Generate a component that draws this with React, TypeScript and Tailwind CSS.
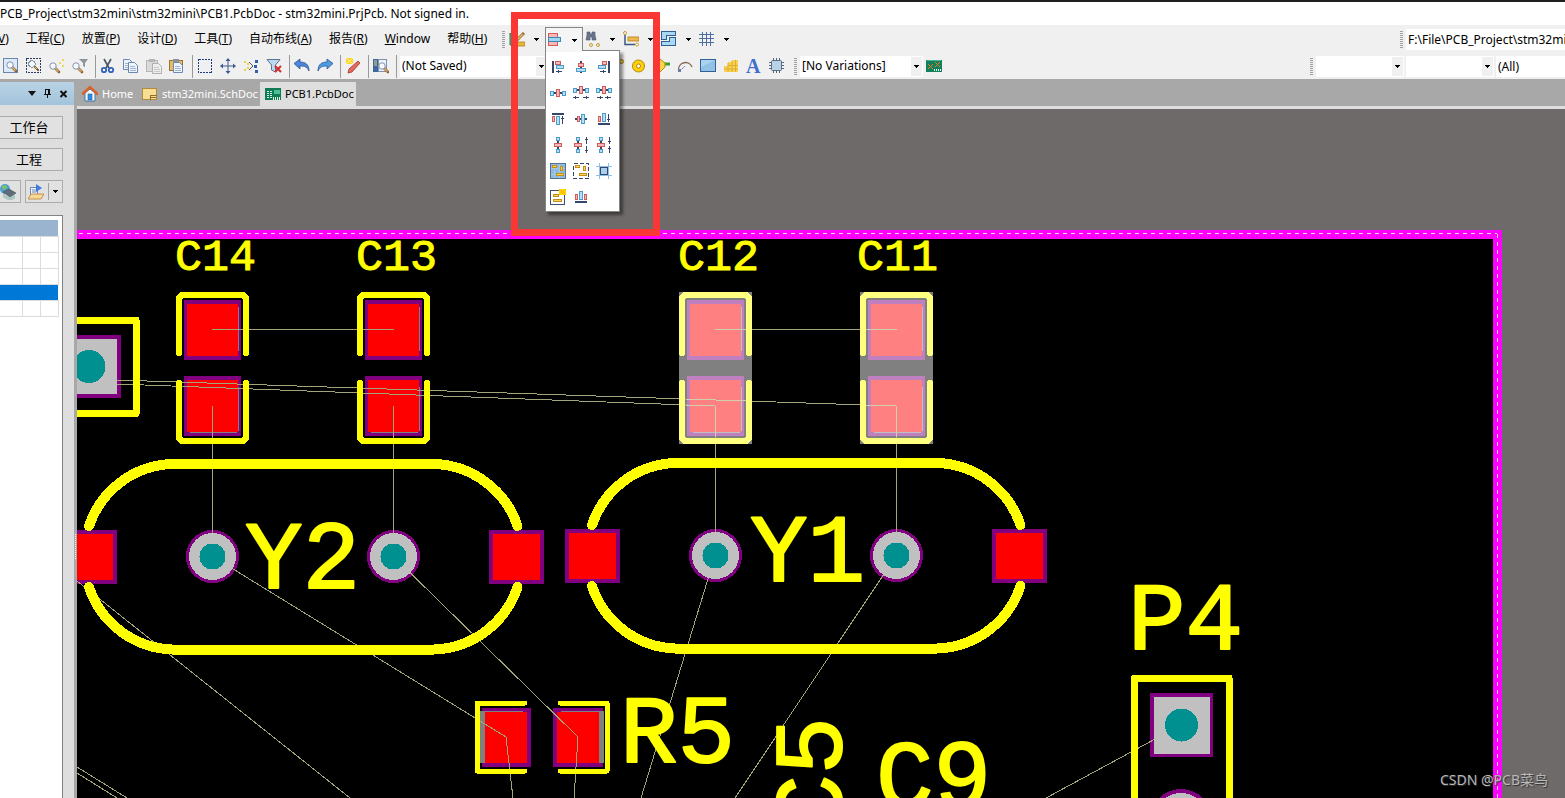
import type { ReactNode } from "react";

const NAVY = "#34466b";

function Icon({ children, smooth = false }: { children: ReactNode; smooth?: boolean }) {
  return (
    <svg width="16" height="16" viewBox="0 0 16 16" fill="none" shapeRendering={smooth ? "auto" : "crispEdges"} className="shrink-0" aria-hidden="true">
      {children}
    </svg>
  );
}

function Box({ x, y, w, h, red = false }: { x: number; y: number; w: number; h: number; red?: boolean }) {
  return <rect x={x + 0.5} y={y + 0.5} width={w - 1} height={h - 1} fill={red ? "#f7b9b9" : "#b5e0f5"} stroke={red ? "#cf5b5b" : "#4b9cc8"} />;
}

function Line({ d, color = NAVY, w = 1 }: { d: string; color?: string; w?: number }) {
  return <path d={d} stroke={color} strokeWidth={w} />;
}

function Caret() {
  return (
    <svg width="5" height="3" viewBox="0 0 5 3" shapeRendering="crispEdges" className="shrink-0" aria-hidden="true">
      <path d="M0 0h5v1h-1v1h-1v1h-1v-1h-1v-1h-1z" fill="#000" />
    </svg>
  );
}

function Grip() {
  return (
    <svg width="3" height="17" viewBox="0 0 3 17" shapeRendering="crispEdges" className="shrink-0" aria-hidden="true">
      <path d="M1.5 0v17" stroke="#a0a0a0" strokeWidth="3" strokeDasharray="1 1" />
    </svg>
  );
}

/* ---------- alignment menu icons ---------- */

const alignIcons: [string, ReactNode][] = [
  ["Align Left", <><Line d="M3 2v12" w={2} /><Box x={5} y={2} w={6} h={4} red /><Box x={6} y={6} w={8} h={4} /><Line d="M6 12.500h6M8.500 11v3M7.500 12v1" /></>],
  ["Align Horizontal Centers", <><Line d="M8 2v12" w={2} /><Box x={5} y={4} w={6} h={4} red /><Box x={3} y={9} w={10} h={4} /></>],
  ["Align Right", <><Line d="M13 2v12" w={2} /><Box x={6} y={2} w={5} h={4} red /><Box x={2} y={6} w={8} h={4} /><Line d="M4 12.500h6M7.500 11v3M8.500 12v1" /></>],
  ["Distribute Horizontally", <><Line d="M3 8h10" w={2} /><Box x={0} y={6} w={4} h={5} /><Box x={6} y={4} w={4} h={8} red /><Box x={12} y={6} w={4} h={5} /></>],
  ["Increase Horizontal Spacing", <><Line d="M3 5h10" w={2} /><Box x={0} y={3} w={4} h={5} /><Box x={6} y={1} w={4} h={8} red /><Box x={12} y={3} w={4} h={5} /><Line d="M0 12.500h6M2.500 11v3M1.500 12v1M10 12.500h6M13.500 11v3M14.500 12v1" /></>],
  ["Decrease Horizontal Spacing", <><Line d="M3 5h10" w={2} /><Box x={0} y={3} w={4} h={5} /><Box x={6} y={1} w={4} h={8} red /><Box x={12} y={3} w={4} h={5} /><Line d="M1 12.500h6M4.500 11v3M5.500 12v1M9 12.500h6M11.500 11v3M10.500 12v1" /></>],
  ["Align Top", <><Line d="M2 3h12" w={2} /><Box x={2} y={5} w={3} h={6} red /><Box x={6} y={5} w={4} h={9} /><Line d="M12.500 5v8M11 7.500h3M12 6.500h1" /></>],
  ["Align Vertical Centers", <><Line d="M2 8h12" w={2} /><Box x={4} y={5} w={3} h={6} red /><Box x={8} y={3} w={4} h={10} /></>],
  ["Align Bottom", <><Line d="M2 13h12" w={2} /><Box x={2} y={5} w={3} h={6} red /><Box x={6} y={2} w={4} h={9} /><Line d="M12.500 3v8M11 8.500h3M12 9.500h1" /></>],
  ["Distribute Vertically", <><Line d="M8 3v10" w={2} /><Box x={6} y={0} w={4} h={4} /><Box x={4} y={6} w={8} h={4} red /><Box x={6} y={12} w={4} h={4} /></>],
  ["Increase Vertical Spacing", <><Line d="M5 3v10" w={2} /><Box x={3} y={0} w={4} h={4} /><Box x={1} y={6} w={8} h={4} red /><Box x={3} y={12} w={4} h={4} /><Line d="M13.500 0v7M12 2.500h3M13.500 9v7M12 13.500h3" /></>],
  ["Decrease Vertical Spacing", <><Line d="M5 3v10" w={2} /><Box x={3} y={0} w={4} h={4} /><Box x={1} y={6} w={8} h={4} red /><Box x={3} y={12} w={4} h={4} /><Line d="M13.500 0v7M12 4.500h3M13.500 9v7M12 11.500h3" /></>],
  [
    "Arrange Within Room",
    <>
      <rect x=".5" y=".5" width="15" height="15" fill="#8dbbe0" stroke="#56718f" />
      <Line d="M1 5.500h14M1 11.500h14M4.500 1v14M9.500 1v14" color="#a3cbe8" />
      <Tiles />
    </>,
  ],
  [
    "Arrange Within Rectangle",
    <>
      <rect x=".5" y=".5" width="15" height="15" stroke="#34466b" strokeDasharray="4 2" />
      <Tiles />
    </>,
  ],
  [
    "Align To Grid",
    <>
      <Line d="M0 3.500h16M0 12.500h16M3.500 0v16M12.500 0v16" color="#8cc0ea" />
      <rect x="4.500" y="4.500" width="7" height="7" fill="#a9d0ee" stroke="#34466b" />
    </>,
  ],
  [
    "Arrange Outside Board",
    <>
      <rect x=".5" y="1.500" width="14" height="14" fill="#fff" stroke="#3b4f75" />
      <rect x="3.500" y="5.500" width="5" height="2" fill="#ffd45c" stroke="#c58e14" />
      <rect x="3.500" y="10.500" width="8" height="2" fill="#ffd45c" stroke="#c58e14" />
      <rect x="9" y="0" width="7" height="6" fill="#ffd800" />
      <Line d="M9 0l7 6M16 0l-7 6" color="#ffbe00" />
    </>,
  ],
  ["Align Baselines", <><Line d="M2 13h12" w={2} /><Box x={2} y={5} w={3} h={6} red /><Box x={6} y={2} w={4} h={9} /><Box x={11} y={5} w={3} h={6} red /></>],
];

function Tiles() {
  return (
    <g fill="#ffd45c" stroke="#c58e14">
      <path d="M2.500 2.500h4v2h-4zM10.500 3.500h2v4h-2zM6.500 10.500h7v2h-7z" />
    </g>
  );
}

/* ---------- main toolbar icons ---------- */

const lens = (x: number, y: number) => (
  <g transform={`translate(${x} ${y})`}>
    <path d="M6 6l4 4" stroke="#8a6236" strokeWidth="2.600" strokeLinecap="round" />
    <path d="M6 6l3.500 3.500" stroke="#e8b671" strokeWidth="1.200" />
    <circle cx="4" cy="4" r="3.200" fill="#f3f9ff" stroke="#8794a8" />
  </g>
);

const page = (x: number, y: number, fill: string, edge: string) => (
  <g transform={`translate(${x} ${y})`}>
    <path d="M.5.5h6l3 3v7h-9z" fill={fill} stroke={edge} />
    <path d="M2 4.500h5M2 6.500h6M2 8.500h6" stroke={edge} strokeOpacity=".6" />
  </g>
);

const toolbarGroups: [string, ReactNode][][] = [
  [
    ["Zoom Document", <><rect x=".5" y=".5" width="14" height="14" fill="#dcebfb" stroke="#6c86ad" />{lens(3, 3)}</>],
    ["Zoom Area", <><path d="M.5.5h14v14H.5z" stroke="#2b3a66" strokeDasharray="2 1" />{lens(2, 2)}</>],
    ["Zoom Selected", <>{lens(0, 4)}<path d="M10 4h2v2h-2zM13 1h2v2h-2zM13 7h2v2h-2z" fill="#efd75d" /></>],
    ["Zoom Filtered", <><path d="M7 1h9l-3 4v4l-2-1V5z" fill="#8d949c" />{lens(0, 4)}</>],
  ],
  [
    ["Cut", <><path d="M4 1l5 9M11 1L6 10" stroke="#4b5360" strokeWidth="1.600" /><circle cx="4" cy="12" r="2.200" stroke="#2f63bd" strokeWidth="1.800" /><circle cx="11" cy="12" r="2.200" stroke="#2f63bd" strokeWidth="1.800" /></>],
    ["Copy", <>{page(0, 1, "#edf4fc", "#6c87b3")}{page(5, 4, "#edf4fc", "#6c87b3")}</>],
    ["Paste", <><rect x=".5" y="2.500" width="11" height="11" fill="#dadada" stroke="#b5b5b5" /><path d="M3 1h6v3H3z" fill="#b5b5b5" />{page(6, 5, "#eee", "#b0b0b0")}</>],
    ["Rubber Stamp", <><rect x=".5" y="2.500" width="13" height="10" fill="#e9bb62" stroke="#9b7430" /><path d="M4 1h6v3H4z" fill="#8b929b" />{page(4, 4, "#edf4fc", "#6c87b3")}</>],
  ],
  [
    ["Select Area", <path d="M1.500 1.500h13v13h-13z" stroke="#1f3d86" strokeDasharray="2 1" />],
    ["Move", <><path d="M8 1.500v13M1.500 8h13" stroke="#3d5a95" /><path d="M8 0l2.500 3h-5zM8 16l2.500-3h-5zM0 8l3-2.500v5zM16 8l-3-2.500v5z" fill="#3d5a95" /></>],
    ["Deselect", <><path d="M1 3h2v2H1zM1 11h2v2H1zM4 5h2v2H4zM4 9h2v2H4z" fill="#e8d04f" /><path d="M6 4l4 4-4 4" stroke="#555" /><path d="M12 2h3v3h-3zM11 7h3v3h-3zM12 12h3v3h-3z" fill="#2c62a8" /></>],
    ["Clear Filter", <><path d="M1 1.500h13L9.500 7v7l-4-2V7z" fill="#bcd8f3" stroke="#5d7290" /><path d="M9 8l6 6M15 8l-6 6" stroke="#d22b2b" strokeWidth="2" /></>],
  ],
  [
    ["Undo", <path d="M0 5.500L6 1v3c5 0 9 2 9 9-2-4-4-5-9-5v3z" fill="#4d86d8" stroke="#2d5596" strokeWidth=".8" />],
    ["Redo", <path d="M16 5.500L10 1v3C5 4 1 6 1 13c2-4 4-5 9-5v3z" fill="#4d9be0" stroke="#2d5596" strokeWidth=".8" />],
  ],
  [
    ["Cross Probe", <><path d="M3 15l1-4 9-8 2 2-8 9z" fill="#e8695f" stroke="#9c3a31" strokeWidth=".8" /><path d="M1 0h7v6H1z" fill="#ffd21e" /><path d="M1 0l7 6M8 0L1 6" stroke="#fff3a0" /></>],
  ],
  [
    ["Browse Components", <><rect x="0" y="1" width="5" height="13" fill="#3c679f" /><path d="M1 3h3M1 5h3M1 7h3" stroke="#e6cf7a" /><rect x="5.500" y="1.500" width="8" height="12" fill="#eaf2fb" stroke="#7d90ac" />{lens(5, 4)}</>],
  ],
];

const placeIcons: [string, ReactNode][] = [
  ["Interactive Route", <path d="M2 13l8-8" stroke="#b88a1a" />],
  ["Interactive Differential", <path d="M2 13l8-8" stroke="#b88a1a" />],
  ["Route Multiple", <><path d="M2 13l11-9" stroke="#4b9cc8" /><circle cx="13.500" cy="3.500" r="2" fill="#ffd34a" stroke="#9e7a1a" /></>],
  ["Place Pad", <><circle cx="7.500" cy="8" r="6" fill="#ffcf10" stroke="#b58a00" /><circle cx="7.500" cy="8" r="2" fill="#fff" stroke="#b58a00" /></>],
  ["Place Via", <><path d="M8 6h8" stroke="#39a12c" strokeWidth="3" /><path d="M1 3l5-2 5 4v4l-5 5-5-4z" fill="#ffd34a" stroke="#b58a00" /></>],
  ["Place Arc", <><path d="M1.500 12A7 7 0 0 1 15 9" stroke="#8b6b55" strokeWidth="1.400" /><path d="M3 13l5-5" stroke="#4a76c5" strokeDasharray="2 1" /><rect x="1" y="11" width="3" height="3" fill="#6f7fa5" /></>],
  ["Place Fill", <><rect x=".5" y="1.500" width="15" height="12" fill="#8fc2e4" stroke="#355f96" /><path d="M1 9V2h14z" fill="#a9d3ee" /></>],
  ["Place Polygon", <><path d="M1 8h4V4h4V2h6v12H1z" fill="#f9d350" /><path d="M1 11h14M5 5v9M9 3v11M12.500 2v12M5 7.500h10" stroke="#dcae34" /></>],
  ["Place String", <text x="0" y="15" fontFamily="Liberation Serif, serif" fontSize="20" fontWeight="700" fill="#3f6fd0">A</text>],
  ["Place Component", <><path d="M0 4.500h15M0 7.500h15M0 10.500h15M4.500 0v15M7.500 0v15M10.500 0v15" stroke="#556a80" /><rect x="2.500" y="2.500" width="10" height="10" rx="1" fill="#b9d2e6" stroke="#5a6d82" /></>],
];

const menubarIcons: [string, ReactNode][] = [
  ["Utilities", <><path d="M1 2v12h7z" fill="#3dbb8c" stroke="#16835c" /><path d="M6 11L15 2" stroke="#8e6128" strokeWidth="3" /><path d="M6 11l8-8" stroke="#f0c060" strokeWidth="1.400" /><rect x="6" y="11" width="10" height="4" fill="#e9b63d" stroke="#b47e14" strokeWidth=".8" /></>],
  ["Align", <><rect x="1.500" y="1.500" width="9" height="12" fill="#f9b8b8" stroke="#d65c5c" /><path d="M2 7.500h9" stroke="#d65c5c" /><rect x="1.500" y="5.500" width="12" height="4" fill="#9ed6f3" stroke="#3f86b4" /></>],
  ["Find", <><path d="M2 1h3v2h2V1h3v3l1 5H7V6H5v3H1l1-5z" fill="#68758a" stroke="#4c586c" strokeWidth=".6" /><circle cx="6" cy="14" r="1.500" stroke="#c39a2c" /><circle cx="13" cy="14" r="1.500" stroke="#c39a2c" /></>],
  ["Dimension", <><path d="M2 4v9.500h10" stroke="#3b5685" strokeWidth="1.500" /><rect x="5" y="6" width="11" height="4" fill="#eeb84a" stroke="#b57d18" strokeWidth=".8" /><circle cx="2" cy="2" r="1.500" fill="#fff" stroke="#c39a2c" /><circle cx="14" cy="13.500" r="1.500" fill="#fff" stroke="#c39a2c" /></>],
  ["Room", <g fill="#a9d8f2" stroke="#2f5f92"><path d="M.5.5h14v4h-9v4h-5z" /><path d="M8.500 6.500h6v8h-14v-4h8z" /></g>],
  ["Grid", <path d="M0 3.500h15M0 7.500h15M0 11.500h15M3.500 1v14M7.500 1v14M11.500 1v14" stroke="#4d6ea0" />],
];

const menus: [string, string][] = [
  ["工程", "C"],
  ["放置", "P"],
  ["设计", "D"],
  ["工具", "T"],
  ["自动布线", "A"],
  ["报告", "R"],
];

function Combo({ label, value, className }: { label: string; value: string; className: string }) {
  return (
    <div className={`relative h-[21px] shrink-0 bg-white ${className}`}>
      <select aria-label={label} className="h-full w-full appearance-none bg-transparent pl-[2px] pr-3 text-[12px] leading-[20px] outline-none">
        <option>{value}</option>
      </select>
      <span className="pointer-events-none absolute inset-y-px right-px flex w-[11px] items-center justify-center bg-[#f0f0f0]">
        <Caret />
      </span>
    </div>
  );
}

function AlignMenu() {
  return (
    <div role="menu" className="absolute -left-px top-[22px] z-20 grid w-[75px] auto-rows-[26px] grid-cols-[repeat(3,23px)] border border-[#858585] bg-white pb-px pt-[3px] shadow-[3px_3px_3px_rgba(0,0,0,0.45)]">
      {alignIcons.map(([name, art]) => (
        <button key={name} role="menuitem" aria-label={name} className="flex items-center justify-center">
          <Icon>{art}</Icon>
        </button>
      ))}
    </div>
  );
}

function MenuBar() {
  return (
    <div className="flex h-7 shrink-0 items-center">
      <nav className="flex w-[502px] shrink-0 gap-[17px] whitespace-nowrap">
        <button className="-ml-[2px]"><u>V</u>)</button>
        {menus.map(([name, key]) => (
          <button key={name}>{name}(<u>{key}</u>)</button>
        ))}
        <button><u>W</u>indow</button>
        <button>帮助(<u>H</u>)</button>
      </nav>
      <Grip />
      <div className="ml-[2px] flex">
        {menubarIcons.map(([name, art], i) => (
          <div key={name} className={i === 1 ? "relative h-6 w-[38px] border border-b-0 border-[#858585] bg-[#f5f5f5]" : "h-6 w-[38px] border border-transparent"}>
            <button aria-label={name} className={i === 1 ? "relative z-30 flex h-6 w-9 items-center gap-[9px] bg-[#f5f5f5] pl-px" : "flex h-[22px] w-9 items-center gap-[9px] pl-px"}>
              <Icon smooth={i < 4 && i !== 1}>{art}</Icon>
              <Caret />
            </button>
            {i === 1 && <AlignMenu />}
          </div>
        ))}
      </div>
      <div className="ml-auto flex items-center">
        <Grip />
        <input aria-label="Document path" defaultValue="F:\File\PCB_Project\stm32mini" className="ml-[3px] h-[21px] w-[159px] bg-white pl-[2px] outline-none" />
      </div>
    </div>
  );
}

function ToolBar() {
  return (
    <div className="flex h-[26px] shrink-0 items-center">
      {toolbarGroups.map((group, g) => (
        <div key={g} className={g === 0 ? "-ml-px flex items-center" : "flex items-center"}>
          {group.map(([name, art]) => (
            <button key={name} aria-label={name} className="flex w-[23px] justify-center">
              <Icon smooth={name !== "Select Area" && name !== "Zoom Area"}>{art}</Icon>
            </button>
          ))}
          <span className="ml-1 h-[23px] w-px bg-[#999]" />
        </div>
      ))}
      <Combo label="Filter" value="(Not Saved)" className="ml-[3px] w-[148px]" />
      <div className="ml-[10px] flex">
        {placeIcons.map(([name, art]) => (
          <button key={name} aria-label={name} className="flex w-[23px] justify-center">
            <Icon smooth={name !== "Place Fill"}>{art}</Icon>
          </button>
        ))}
      </div>
      <div className="ml-[6px] flex items-center">
        <Grip />
        <Combo label="Variations" value="[No Variations]" className="ml-[3px] w-[123px]" />
        <button aria-label="Variant board" className="ml-[3px]">
          <Icon>
            <rect x="0" y="2" width="16" height="12" fill="#12805d" />
            <path d="M1 2.500h14" stroke="#4bb893" />
            <path d="M2 6l5 5M7 6l-5 5M9 4l5 5M14 4l-5 5" stroke="#ef7a1c" />
            <path d="M8 12h8" stroke="#e8f5d8" strokeWidth="2" strokeDasharray="1 1" />
          </Icon>
        </button>
      </div>
      <div className="ml-auto flex items-center">
        <Grip />
        <Combo label="Mask level" value="" className="ml-[3px] w-[88px]" />
        <Combo label="Net" value="" className="ml-[2px] w-[88px]" />
        <input aria-label="Scope" defaultValue="(All)" className="ml-[2px] h-[21px] w-[69px] bg-white pl-[2px] outline-none" />
      </div>
    </div>
  );
}

function ProjectsPanel() {
  return (
    <aside className="mt-[3px] flex w-[74px] shrink-0 flex-col bg-[#dedede]">
      <div className="flex h-[23px] shrink-0 items-center justify-end gap-2 bg-gradient-to-b from-[#b9d3e5] to-[#a3c4dc] pr-[6px]">
        <button aria-label="Panel menu"><svg width="8" height="5"><path d="M0 0h8L4 5z" fill="#111" /></svg></button>
        <button aria-label="Pin">
          <svg width="7" height="9" shapeRendering="crispEdges"><path d="M1 0h5v5h1v1H4v3H3V6H0V5h1z" fill="#111" /><path d="M2 1h2v4H2z" fill="#b0cde1" /></svg>
        </button>
        <button aria-label="Close panel"><svg width="9" height="8"><path d="M1.500 1l6 6M7.500 1l-6 6" stroke="#111" strokeWidth="2" /></svg></button>
      </div>
      <div className="mt-[11px] flex w-[63px] flex-col gap-[9px]">
        <button className="h-[23px] border border-l-0 border-[#ababab] bg-[#e1e1e1] pb-[2px] pr-1 text-[13px]">工作台</button>
        <button className="h-[23px] border border-l-0 border-[#ababab] bg-[#e1e1e1] pb-[2px] pr-1 text-[13px]">工程</button>
        <div className="flex gap-1">
          <button aria-label="Vault" className="flex h-[23px] w-[21px] items-center border border-l-0 border-[#ababab] bg-[#e1e1e1]">
            <Icon smooth>
              <circle cx="5" cy="5" r="5" fill="#4f9ed6" />
              <path d="M2 2l4-1 1 3-4 2z" fill="#7ec850" />
              <path d="M3 8l6-3 7 4-6 4z" fill="#5f6d7a" stroke="#39424c" strokeWidth=".5" />
              <path d="M4 10v4M6 11v4M8 12v4M10 13v3M12 12v4M14 11v4" stroke="#7fb0a6" />
            </Icon>
          </button>
          <button aria-label="Open" className="flex h-[23px] w-[38px] items-center gap-1 border border-[#ababab] bg-[#e1e1e1] pl-[2px]">
            <Icon smooth>
              <path d="M2.500 3.500h7v9h-7z" fill="#eef4fc" stroke="#6c87b3" />
              <path d="M4 6h4M4 8h4" stroke="#6c87b3" />
              <path d="M8 0l6 4-6 4z" fill="#3f7be0" />
              <path d="M0 15l3-5h13l-3 5z" fill="#f8d79a" stroke="#b9832e" strokeWidth=".8" />
            </Icon>
            <span className="h-[17px] w-px bg-[#a0a0a0]" />
            <Caret />
          </button>
        </div>
      </div>
      <div className="mt-3 w-[63px] flex-1 border-r border-t border-[#828282] bg-white pt-1">
        <table className="w-[58px] table-fixed border-collapse">
          <colgroup>
            <col className="w-[22px]" />
            <col className="w-[18px]" />
            <col className="w-[18px]" />
          </colgroup>
          <tbody>
            <tr className="h-4 bg-[#9ab3cf]"><td colSpan={3} /></tr>
            {["a", "b", "c"].map((row) => (
              <tr key={row} className="h-4">
                <td className="border border-l-0 border-[#dcdcdc]" />
                <td className="border border-[#dcdcdc]" />
                <td className="border border-[#dcdcdc]" />
              </tr>
            ))}
            <tr className="h-4 bg-[#0078d7]"><td colSpan={3} /></tr>
            <tr className="h-4">
              <td className="border border-l-0 border-[#dcdcdc]" />
              <td className="border border-[#dcdcdc]" />
              <td className="border border-[#dcdcdc]" />
            </tr>
          </tbody>
        </table>
      </div>
    </aside>
  );
}

function DocumentTabs() {
  return (
    <div role="tablist" className="flex h-[27px] shrink-0 whitespace-nowrap pl-[5px] pt-[3px] text-[11px]">
      <button role="tab" className="flex w-[60px] items-center gap-1 text-white">
        <Icon smooth>
          <path d="M3 7l5-4 5 4v8H3z" fill="#f4f8fb" stroke="#3f78a8" />
          <path d="M0 8.500L8 1l8 7.500" stroke="#d9622b" strokeWidth="2.400" />
          <rect x="6" y="8" width="4" height="6" fill="#2f8be0" stroke="#1d5ea0" strokeWidth=".6" />
        </Icon>
        Home
      </button>
      <button role="tab" className="flex w-[118px] items-center gap-1 text-white">
        <Icon>
          <rect x=".5" y="2.500" width="14" height="11" fill="#f8dd93" stroke="#b18a3c" />
          <path d="M8 13.500V9.500h7M9 11.500h5" stroke="#8f6d28" />
        </Icon>
        stm32mini.SchDoc
      </button>
      <button role="tab" aria-selected="true" className="flex w-24 items-center gap-1 bg-[#dedede] pl-[5px]">
        <Icon>
          <rect x="0" y="2" width="16" height="12" fill="#0e7a56" />
          <path d="M2 5h2M2 7h2M2 9h2M2 11h2M5 5h2M5 7h2M5 9h2M5 11h2" stroke="#d6f0e2" />
          <rect x="9" y="4" width="6" height="4" fill="#4cc095" />
          <path d="M8 12h8" stroke="#e8f5d8" strokeWidth="3" strokeDasharray="1 1" />
        </Icon>
        PCB1.PcbDoc
      </button>
    </div>
  );
}

/* ---------- board drawing ---------- */

const capacitors = [
  { id: "C14", x: 175, dx: 0, selected: false },
  { id: "C13", x: 356, dx: 181, selected: false },
  { id: "C12", x: 678, dx: 503, selected: true },
  { id: "C11", x: 857, dx: 684, selected: true },
];

const crystals = [
  { id: "Y2", dx: 0, dy: 0 },
  { id: "Y1", dx: 503, dy: -1 },
];

const designators = [
  { id: "Y2", x: 245, y: 588 },
  { id: "Y1", x: 750, y: 581 },
  { id: "R5", x: 620, y: 762 },
  { id: "C9", x: 876, y: 807 },
  { id: "P4", x: 1128, y: 649 },
];

function Board() {
  return (
    <svg viewBox="77 109 1488 689" preserveAspectRatio="xMinYMin slice" className="absolute inset-0 h-full w-full" fill="none" shapeRendering="crispEdges" role="img" aria-label="PCB layout">
      <path d="M77 239H1493V1200H77z" fill="#000" />
      <path d="M77 234H1497.500V1200" stroke="#ff00ff" strokeWidth="9" />
      <path d="M77 233.500H1497" stroke="#dcdcdc" strokeDasharray="4 4" strokeDashoffset="6" />
      <path d="M1497.500 234V1200" stroke="#dcdcdc" strokeDasharray="4 4" />

      {/* solder mask and copper */}
      <rect x="60" y="335" width="61" height="63" fill="#800080" />
      {capacitors.map(({ id, dx, selected }) => (
        <g key={id} transform={`translate(${dx} 0)`}>
          {selected && <rect x="176" y="292" width="73" height="152" fill="#808080" />}
          {[300, 376].map((y) => (
            <g key={y}>
              <rect x="184" y={y} width="57" height="60" fill={selected ? "#c080c0" : "#800080"} />
              <path d={y === 300 ? "M238.500 307v44" : "M238.500 387v44M190 432.500h47"} stroke={selected ? "#c0c0c0" : "#808080"} />
              <rect x="187" y={y + 4} width="51" height="52" fill={selected ? "#ff8080" : "#ff0000"} />
            </g>
          ))}
        </g>
      ))}
      {crystals.map(({ id, dx, dy }) => (
        <g key={id} transform={`translate(${dx} ${dy})`}>
          <path d="M62 529.500h55v54H62zM489 529.500h55v54h-55z" fill="#800080" />
          <path d="M66 533.500h47v46H66zM493 533.500h47v46h-47z" fill="#ff0000" />
          <circle cx="212.500" cy="556.500" r="26.500" fill="#800080" />
          <circle cx="393.500" cy="556.500" r="26.500" fill="#800080" />
        </g>
      ))}
      <path d="M482 708h49v59h-49zM553 708h50v59h-50z" fill="#800080" />
      <path d="M480 711h5v52h-5zM599 711h5v52h-5zM485 711h38v1h-38zM561 711h38v1h-38z" fill="#808080" />
      <path d="M485 712h42v51h-42zM557 712h42v51h-42z" fill="#ff0000" />
      <rect x="1150" y="693" width="63" height="64" fill="#800080" />
      <circle cx="1181" cy="820" r="31" fill="#800080" />

      {/* unrouted connections */}
      <path
        d="M212 329.500H394M715 329.500H897M212.500 406V540M393.500 406V540M715.500 406V540M896.500 406V540M117 380L896 406M117 384L715 406M212 556L506 737L513 798M393 556L578 737L574 798M715 556L641 798M896 556L735 798M77 581L350 798M77 767L127 798M77 773L117 798M1181 725L1046 798"
        stroke="#a3a578"
      />
      {/* the same nets where they run over selected pads */}
      <path d="M715 329.500H746M866 329.500H897M715.500 406V437M896.500 406V437M686 399L746 401M686 405L715 406M866 405L896 406" stroke="#d0d0ae" />

      {/* plated holes */}
      <rect x="60" y="339" width="57" height="55" fill="#c0c0c0" />
      <circle cx="89" cy="366.500" r="16.500" fill="#009090" />
      {crystals.map(({ id, dx, dy }) => (
        <g key={id} transform={`translate(${dx} ${dy})`}>
          <circle cx="212.500" cy="556.500" r="23.500" fill="#c0c0c0" />
          <circle cx="212.500" cy="556.500" r="13" fill="#009090" />
          <circle cx="393.500" cy="556.500" r="23.500" fill="#c0c0c0" />
          <circle cx="393.500" cy="556.500" r="13" fill="#009090" />
        </g>
      ))}
      <rect x="1154" y="697" width="56" height="57" fill="#c0c0c0" />
      <circle cx="1181.500" cy="725" r="16.500" fill="#009090" />
      <circle cx="1181" cy="820" r="27" fill="#c0c0c0" />

      {/* silkscreen */}
      <g stroke="#ffff00" strokeLinecap="round" strokeLinejoin="round">
        <path d="M60 320H136V413.500H60" strokeWidth="7" />
        {capacitors.map(({ id, dx, selected }) => (
          <path key={id} transform={`translate(${dx} 0)`} d="M179 353V298L182 295H243L246 298V353M179 383V438L182 441H243L246 438V383" strokeWidth="6" stroke={selected ? "#ffff80" : "#ffff00"} />
        ))}
        {crystals.map(({ id, dx, dy }) => (
          <path key={id} transform={`translate(${dx} ${dy})`} d="M89 526A91 91 0 0 1 172 464H434A91 91 0 0 1 517.500 526M89 587A91 91 0 0 0 172 649.500H434A91 91 0 0 0 517.500 587" strokeWidth="10" />
        ))}
        <path d="M525 703H477V771H525M560 703H607V771H560" strokeWidth="5" />
        <path d="M1134.500 860V678H1229V860" strokeWidth="7" />
      </g>
      <g fill="#ffff00" stroke="#ffff00" strokeLinejoin="round" fontFamily="Liberation Mono, monospace">
        {capacitors.map(({ id, x }) => (
          <text key={id} x={x} y="270" fontSize="45" strokeWidth="1">{id}</text>
        ))}
        {designators.map(({ id, x, y }) => (
          <text key={id} x={x} y={y} fontSize="96" strokeWidth="2">{id}</text>
        ))}
        <text transform="translate(841 832) rotate(-90)" fontSize="96" strokeWidth="2">C5</text>
      </g>
    </svg>
  );
}

export default function App() {
  return (
    <div className="relative flex h-screen flex-col overflow-hidden border-t-2 border-[#1f1f1f] bg-[#f0f0f0] font-['Noto_Sans','Noto_Sans_CJK_SC',sans-serif] text-[12px] leading-[16px] text-black">
      <header className="flex h-[23px] shrink-0 items-center whitespace-nowrap bg-white">
        <h1>PCB_Project\stm32mini\stm32mini\PCB1.PcbDoc - stm32mini.PrjPcb. Not signed in.</h1>
      </header>
      <MenuBar />
      <ToolBar />
      <div className="flex min-h-0 flex-1 bg-[#a8a8a8]">
        <ProjectsPanel />
        <div className="flex w-[3px] shrink-0 items-center justify-center pt-[216px]">
          <span className="h-[25px] border-l border-dotted border-white" />
        </div>
        <main className="flex min-w-0 flex-1 flex-col">
          <DocumentTabs />
          <div className="relative flex-1 overflow-hidden border-t-[3px] border-[#dedede] bg-[#6e6a69]">
            <Board />
            <p className="absolute bottom-2 right-[17px] text-[14px] leading-[20px] text-[#b8b8b8] [text-shadow:1px_1px_1px_#333]">CSDN @PCB菜鸟</p>
          </div>
        </main>
      </div>
      {/* highlight frame around the open menu */}
      <div className="pointer-events-none absolute left-[511px] top-[10px] z-40 h-[224px] w-[149px] border-[7px] border-[#fb3735]" />
    </div>
  );
}
